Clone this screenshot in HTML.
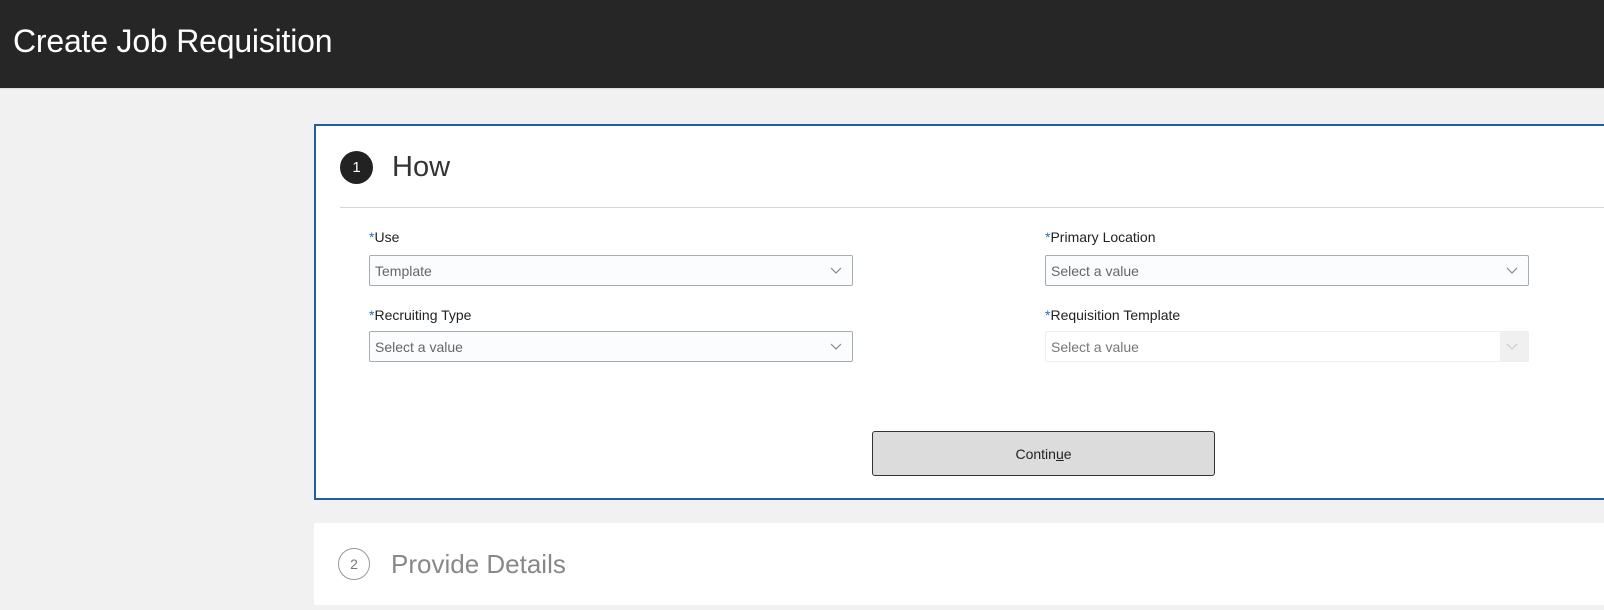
<!DOCTYPE html>
<html><head><meta charset="utf-8"><style>
*{margin:0;padding:0;box-sizing:border-box}
body{width:1604px;height:610px;background:#f1f1f1;font-family:"Liberation Sans",sans-serif;position:relative;overflow:hidden}
.hdr{position:absolute;left:0;top:0;width:1604px;height:89px;background:#262626;border-bottom:1px solid #ddd}
.hdr span{position:absolute;left:13px;top:23px;color:#fff;font-size:32px;letter-spacing:-0.2px}
.p1{position:absolute;left:314px;top:124px;width:1300px;height:376px;background:#fff;border:2px solid #1f5fa8}
.c1{position:absolute;left:340px;top:151px;width:33px;height:33px;border-radius:50%;background:#222;color:#fff;font-size:15px;text-align:center;line-height:33px}
.how{position:absolute;left:392px;top:151px;font-size:29px;color:#333;font-weight:300}
.sep{position:absolute;left:340px;top:207px;width:1264px;height:1px;background:#d6d6d6}
.lbl{position:absolute;font-size:14px;color:#222}
.lbl b{color:#1f6fc0;font-weight:normal}
.inp{position:absolute;width:484px;height:31px;border:1px solid #a5acb2;border-radius:2px;background:#fafcfe;font-size:14px;color:#666;padding:7px 5px}
.inp svg{position:absolute;right:10px;top:11px}
.dis{border-color:#eee;background:#fff;color:#777}
.dis .dd{position:absolute;right:0;top:0;width:28px;height:29px;background:#f0f0f0}
.btn{position:absolute;left:872px;top:431px;width:343px;height:45px;background:#dcdcdc;border:1px solid #333;border-radius:3px;font-size:14px;color:#222;text-align:center;line-height:45px}
.p2{position:absolute;left:314px;top:523px;width:1300px;height:82px;background:#fff}
.c2{position:absolute;left:338px;top:548px;width:32px;height:32px;border-radius:50%;border:1px solid #999;color:#777;font-size:14px;text-align:center;line-height:30px}
.pd{position:absolute;left:391px;top:549px;font-size:26px;color:#888;font-weight:300}
</style></head><body>
<div class="hdr"><span>Create Job Requisition</span></div>
<div class="p1"></div>
<div class="c1">1</div>
<div class="how">How</div>
<div class="sep"></div>
<div class="lbl" style="left:369px;top:229px"><b>*</b>Use</div>
<div class="inp" style="left:369px;top:255px">Template<svg width="12" height="8" viewBox="0 0 12 8"><path d="M1 1l5 5 5-5" fill="none" stroke="#888" stroke-width="1.2"/></svg></div>
<div class="lbl" style="left:369px;top:307px"><b>*</b>Recruiting Type</div>
<div class="inp" style="left:369px;top:331px">Select a value<svg width="12" height="8" viewBox="0 0 12 8"><path d="M1 1l5 5 5-5" fill="none" stroke="#888" stroke-width="1.2"/></svg></div>
<div class="lbl" style="left:1045px;top:229px"><b>*</b>Primary Location</div>
<div class="inp" style="left:1045px;top:255px">Select a value<svg width="12" height="8" viewBox="0 0 12 8"><path d="M1 1l5 5 5-5" fill="none" stroke="#888" stroke-width="1.2"/></svg></div>
<div class="lbl" style="left:1045px;top:307px"><b>*</b>Requisition Template</div>
<div class="inp dis" style="left:1045px;top:331px">Select a value<div class="dd"></div><svg width="12" height="8" viewBox="0 0 12 8"><path d="M1 1l5 5 5-5" fill="none" stroke="#ccc" stroke-width="1.2"/></svg></div>
<div class="btn">Contin<u>u</u>e</div>
<div class="p2"></div>
<div class="c2">2</div>
<div class="pd">Provide Details</div>
</body></html>
